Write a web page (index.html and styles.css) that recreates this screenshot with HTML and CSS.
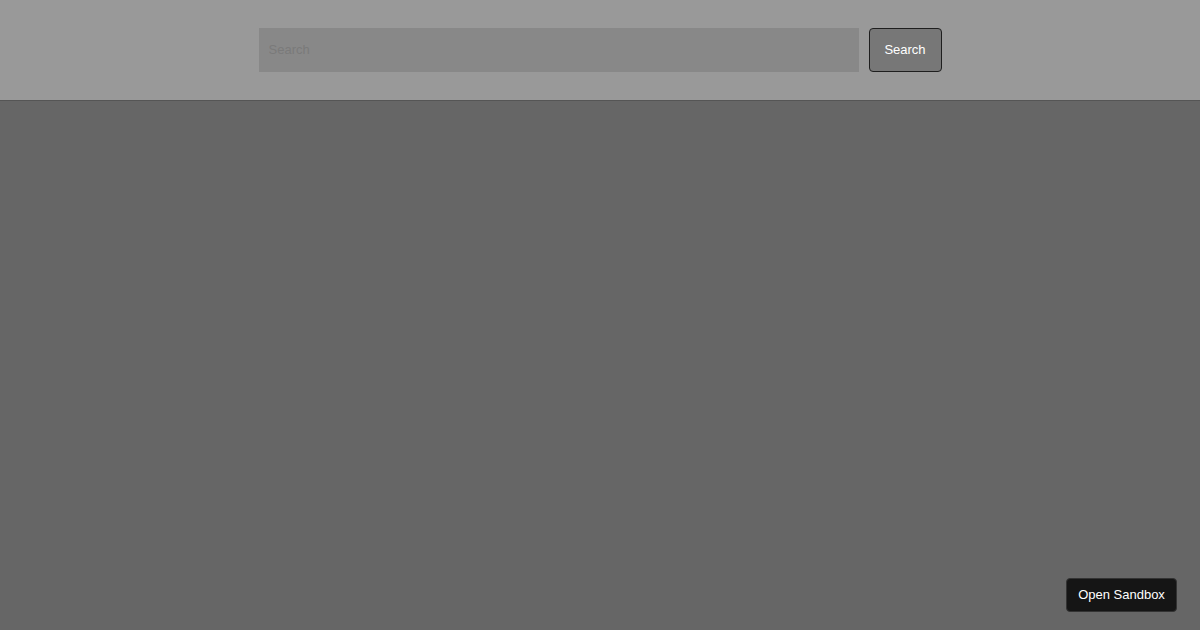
FILE: index.html
```html
<!DOCTYPE html>
<html>
<head>
<meta charset="utf-8">
<link rel="stylesheet" href="styles.css">
</head>
<body>
<header class="top">
  <form class="search">
    <input class="search-input" type="text" placeholder="Search">
    <button class="search-btn" type="button">Search</button>
  </form>
</header>
<main class="main">
  <button class="sandbox-btn" type="button">Open Sandbox</button>
</main>
</body>
</html>
```
FILE: styles.css
```css
html, body {
  margin: 0;
  padding: 0;
  height: 100%;
}
body {
  font-family: "Liberation Sans", Arial, sans-serif;
  background: #666666;
  display: flex;
  flex-direction: column;
}
.top {
  background: #999999;
  border-bottom: 1px solid #555555;
  display: flex;
  align-items: center;
  justify-content: center;
  box-sizing: border-box;
  height: 101px;
  padding-bottom: 1px;
}
.search {
  display: flex;
  gap: 10px;
  margin: 0;
}
.search-input {
  width: 600px;
  height: 44px;
  box-sizing: border-box;
  border: none;
  background: #888888;
  padding: 0 10px;
  font-family: "Liberation Sans", Arial, sans-serif;
  font-size: 13px;
  color: #333;
  outline: none;
}
.search-input::placeholder {
  color: #7a7a7a;
}
.search-btn {
  width: 73px;
  height: 44px;
  box-sizing: border-box;
  background: #777777;
  border: 1px solid #1e1e1e;
  border-radius: 4px;
  color: #ffffff;
  font-family: "Liberation Sans", Arial, sans-serif;
  font-size: 13px;
  padding: 0 0 1px 0;
}
.main {
  flex: 1;
  position: relative;
}
.sandbox-btn {
  position: absolute;
  right: 23px;
  bottom: 18px;
  width: 111px;
  height: 34px;
  box-sizing: border-box;
  background: #151515;
  border: 1px solid #333333;
  border-radius: 4px;
  color: #ffffff;
  font-family: "Liberation Sans", Arial, sans-serif;
  font-size: 13px;
  padding: 0 0 2px 0;
}
```
